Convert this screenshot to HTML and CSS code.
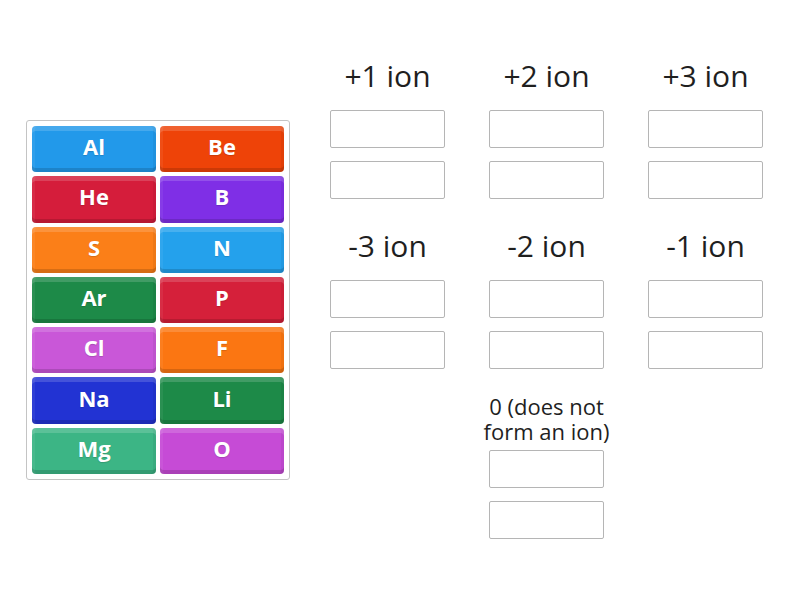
FILE: index.html
```html
<!DOCTYPE html>
<html>
<head>
<meta charset="utf-8">
<link rel="stylesheet" href="styles.css">
</head>
<body>
<div class="page">
  <div class="bank">
    <div class="tile c-blue">Al</div>
    <div class="tile c-redorange">Be</div>
    <div class="tile c-crimson">He</div>
    <div class="tile c-purple">B</div>
    <div class="tile c-orange">S</div>
    <div class="tile c-sky">N</div>
    <div class="tile c-green">Ar</div>
    <div class="tile c-red">P</div>
    <div class="tile c-orchid">Cl</div>
    <div class="tile c-orange2">F</div>
    <div class="tile c-navy">Na</div>
    <div class="tile c-green">Li</div>
    <div class="tile c-mint">Mg</div>
    <div class="tile c-magenta">O</div>
  </div>
  <div class="groups">
    <div class="group"><div class="head">+1 ion</div><div class="slot"></div><div class="slot"></div></div>
    <div class="group"><div class="head">+2 ion</div><div class="slot"></div><div class="slot"></div></div>
    <div class="group"><div class="head">+3 ion</div><div class="slot"></div><div class="slot"></div></div>
    <div class="group"><div class="head">-3 ion</div><div class="slot"></div><div class="slot"></div></div>
    <div class="group"><div class="head">-2 ion</div><div class="slot"></div><div class="slot"></div></div>
    <div class="group"><div class="head">-1 ion</div><div class="slot"></div><div class="slot"></div></div>
    <div class="group g-mid"><div class="head small">0 (does not form an ion)</div><div class="slot"></div><div class="slot"></div></div>
  </div>
</div>
</body>
</html>
```
FILE: styles.css
```css
html, body {
  margin: 0;
  padding: 0;
  background: #ffffff;
}
body {
  font-family: "Open Sans", "DejaVu Sans", sans-serif;
  width: 800px;
  height: 600px;
  overflow: hidden;
}
.page {
  display: flex;
  align-items: flex-start;
  padding-left: 26px;
}
.bank {
  margin-top: 120px;
  box-sizing: border-box;
  width: 264px;
  height: 360px;
  border: 1px solid #c4c4c4;
  border-radius: 3px;
  padding: 5px;
  display: grid;
  grid-template-columns: 124px 124px;
  grid-auto-rows: 1fr;
  gap: 4px;
}
.tile {
  border-radius: 4px;
  color: #ffffff;
  font-weight: 700;
  font-size: 22px;
  display: flex;
  align-items: center;
  justify-content: center;
  padding-bottom: 6px;
  box-sizing: border-box;
  text-shadow: 0 1px 1px rgba(0,0,0,0.15);
  box-shadow: inset 0 5px 0 rgba(255,255,255,0.16), inset 0 -4px 0 rgba(0,0,0,0.14), inset 3px 0 0 rgba(255,255,255,0.06), inset -3px 0 0 rgba(0,0,0,0.05);
}
.c-blue { background: #2299ea; }
.c-redorange { background: #ee4308; }
.c-crimson { background: #d51d3b; }
.c-purple { background: #7f2fe6; }
.c-orange { background: #fb7f18; }
.c-sky { background: #24a1ec; }
.c-green { background: #1d8a48; }
.c-red { background: #d5203a; }
.c-orchid { background: #c957d8; }
.c-orange2 { background: #fb7612; }
.c-navy { background: #2233d3; }
.c-mint { background: #3cb585; }
.c-magenta { background: #c64bd6; }

.groups {
  margin-left: 18px;
  margin-top: 55px;
  display: grid;
  grid-template-columns: repeat(3, 159px);
  row-gap: 26px;
}
.group {
  display: flex;
  flex-direction: column;
  align-items: center;
}
.g-mid {
  grid-column: 2;
}
.head {
  height: 41px;
  margin-bottom: 14px;
  font-size: 30px;
  line-height: 41px;
  color: #1f1f1f;
  text-align: center;
  white-space: nowrap;
}
.head.small {
  font-size: 22px;
  line-height: 25px;
  white-space: normal;
  width: 150px;
  padding-top: 6px;
  height: 35px;
  display: flex;
  align-items: center;
  justify-content: center;
}
.slot {
  box-sizing: border-box;
  width: 115px;
  height: 38px;
  border: 1px solid #b5b5b5;
  border-radius: 2px;
  background: #ffffff;
}
.slot + .slot {
  margin-top: 13px;
}
```
